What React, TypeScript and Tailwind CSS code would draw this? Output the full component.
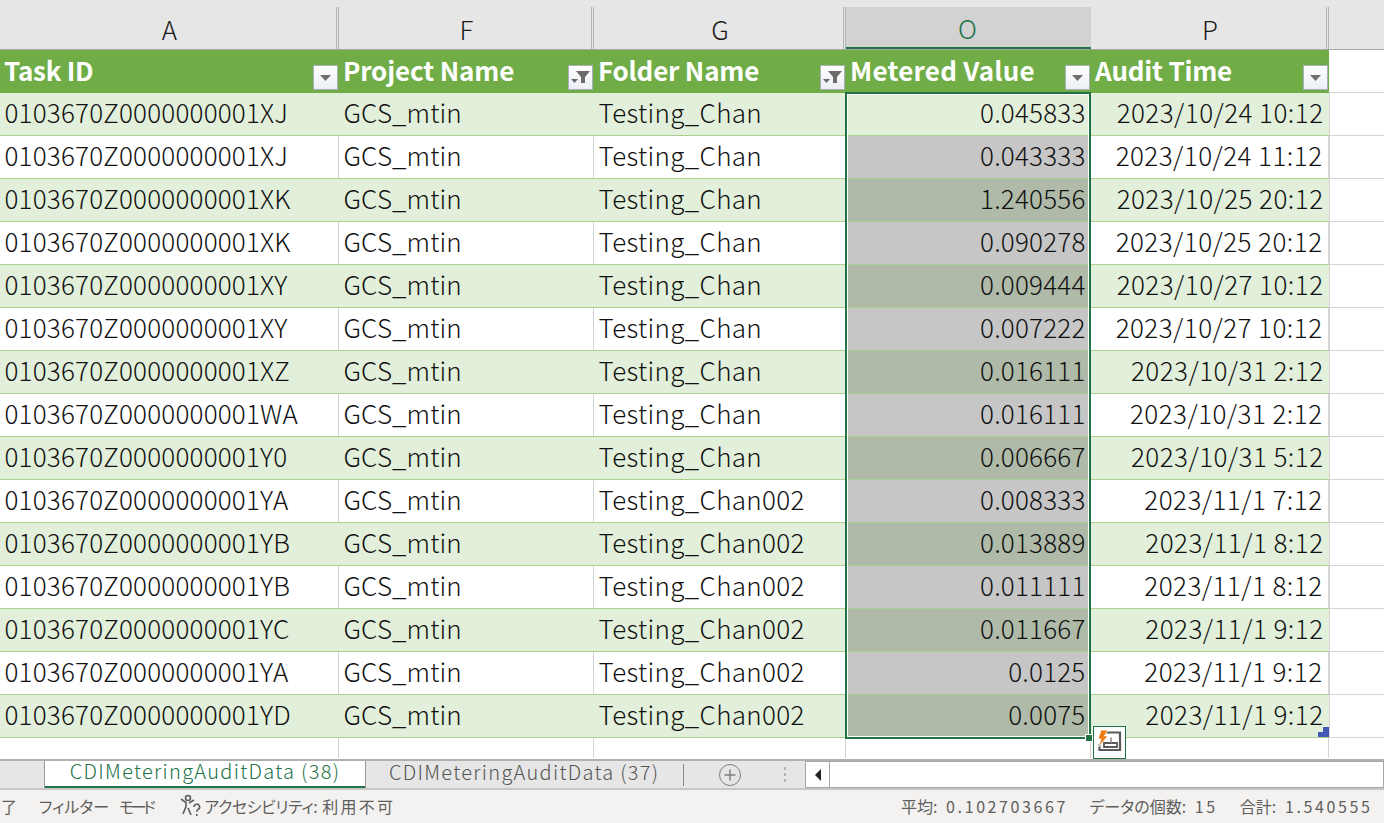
const FONT = "font-['Noto_Sans_CJK_JP','Noto_Sans',sans-serif]";

type Row = [string, string, string, string];
const rows: Row[] = [
  ["0103670Z0000000001XJ", "Testing_Chan", "0.045833", "2023/10/24 10:12"],
  ["0103670Z0000000001XJ", "Testing_Chan", "0.043333", "2023/10/24 11:12"],
  ["0103670Z0000000001XK", "Testing_Chan", "1.240556", "2023/10/25 20:12"],
  ["0103670Z0000000001XK", "Testing_Chan", "0.090278", "2023/10/25 20:12"],
  ["0103670Z0000000001XY", "Testing_Chan", "0.009444", "2023/10/27 10:12"],
  ["0103670Z0000000001XY", "Testing_Chan", "0.007222", "2023/10/27 10:12"],
  ["0103670Z0000000001XZ", "Testing_Chan", "0.016111", "2023/10/31 2:12"],
  ["0103670Z0000000001WA", "Testing_Chan", "0.016111", "2023/10/31 2:12"],
  ["0103670Z0000000001Y0", "Testing_Chan", "0.006667", "2023/10/31 5:12"],
  ["0103670Z0000000001YA", "Testing_Chan002", "0.008333", "2023/11/1 7:12"],
  ["0103670Z0000000001YB", "Testing_Chan002", "0.013889", "2023/11/1 8:12"],
  ["0103670Z0000000001YB", "Testing_Chan002", "0.011111", "2023/11/1 8:12"],
  ["0103670Z0000000001YC", "Testing_Chan002", "0.011667", "2023/11/1 9:12"],
  ["0103670Z0000000001YA", "Testing_Chan002", "0.0125", "2023/11/1 9:12"],
  ["0103670Z0000000001YD", "Testing_Chan002", "0.0075", "2023/11/1 9:12"],
];

const GRID = "grid grid-cols-[339px_255px_252px_245px_238px_55px]";

function FilterButton({ active }: { active?: boolean }) {
  return (
    <div className="absolute right-px bottom-[3px] flex h-[25px] w-[25px] items-center justify-center border border-[#a9afbd] bg-gradient-to-b from-white to-[#eceef6]">
      {active ? (
        <svg width="19" height="14" viewBox="0 0 19 14">
          <path d="M5 0h14l-5 6v6h-4V6z" fill="#6b6b6b" />
          <path d="M0 8h7l-3.5 4z" fill="#6b6b6b" />
        </svg>
      ) : (
        <svg width="11" height="6" viewBox="0 0 11 6">
          <path d="M0 0h11L5.500 6z" fill="#6f6f6f" />
        </svg>
      )}
    </div>
  );
}

function ColumnHead({ label, selected }: { label: string; selected?: boolean }) {
  return (
    <div
      className={`flex items-center justify-center border-double text-[26px] font-light ${
        selected
          ? "border-b-2 border-b-[#217346] bg-[#d2d2d2] pr-[2px] text-[#217346]"
          : "border-r-[3px] border-[#b4b4b4] pl-[3px] text-[#1a1a1a]"
      }`}
    >
      {label}
    </div>
  );
}

function HeaderCell({ label, active, tracking }: { label: string; active?: boolean; tracking: string }) {
  return (
    <div className={`relative flex h-[43px] items-center pb-[3px] pl-[4px] text-[26px] leading-[30px] font-bold text-white ${tracking}`}>
      {label}
      <FilterButton active={active} />
    </div>
  );
}

function Cell({ children, right, line, selected, tracking }: {
  children: string;
  right?: boolean;
  line: boolean;
  selected?: "band" | "plain";
  tracking: string;
}) {
  let bg = "";
  if (selected === "band") bg = "bg-[#afbaa8]";
  if (selected === "plain") bg = "bg-[#c6c6c6]";
  return (
    <div
      className={`flex h-[42px] items-center whitespace-nowrap pb-[4px] leading-[30px] ${tracking} ${right ? "justify-end pr-[5.500px]" : "pl-[4.500px]"} ${
        line ? "border-r border-[#d4d4d4]" : ""
      } ${bg}`}
    >
      {children}
    </div>
  );
}

function Latin({ children }: { children: string }) {
  return <span className="tracking-[2.600px]">{children}</span>;
}

export default function App() {
  return (
    <div className={`flex h-[823px] w-[1384px] flex-col overflow-hidden bg-white ${FONT}`}>
      <div className="h-[7px] shrink-0 bg-[#e6e6e6]" />
      <div className={`${GRID} h-[42px] shrink-0 bg-[#e6e6e6]`}>
        <ColumnHead label="A" />
        <ColumnHead label="F" />
        <ColumnHead label="G" />
        <ColumnHead label="O" selected />
        <ColumnHead label="P" />
        <div />
      </div>
      <div className="h-px shrink-0 bg-[#a6a6a6]" />

      <div className="relative flex-1">
        <div className={`${GRID} h-[43px]`}>
          <div className="col-span-5 grid grid-cols-subgrid bg-[#70ad47]">
            <HeaderCell label="Task ID" tracking="tracking-[-0.3px]" />
            <HeaderCell label="Project Name" tracking="tracking-[-0.15px]" active />
            <HeaderCell label="Folder Name" tracking="tracking-[-0.2px]" active />
            <HeaderCell label="Metered Value" tracking="tracking-[0.25px]" />
            <HeaderCell label="Audit Time" tracking="tracking-[-0.2px]" />
          </div>
          <div className="border-b border-[#d4d4d4]" />
        </div>

        {rows.map((r, i) => {
          const band = i % 2 === 0;
          return (
            <div key={i} className={`${GRID} h-[43px] text-[26px] font-light text-[#111]`}>
              <div
                className={`col-span-5 grid h-[43px] grid-cols-subgrid border-b border-[#a9d08e] ${
                  band ? "bg-[#e2efda]" : "bg-white"
                }`}
              >
                <Cell line={!band} tracking="tracking-[0.2px]">{r[0]}</Cell>
                <Cell line={!band} tracking="tracking-[0.1px]">GCS_mtin</Cell>
                <Cell line={!band} tracking="tracking-[0.33px]">{r[1]}</Cell>
                <Cell right line={false} tracking="tracking-[0.2px]" selected={i === 0 ? undefined : band ? "band" : "plain"}>
                  {r[2]}
                </Cell>
                <Cell right line={!band} tracking="tracking-[0.45px]">{r[3]}</Cell>
              </div>
              <div className="border-b border-l border-[#d4d4d4]" />
            </div>
          );
        })}

        <div className={`${GRID} h-[20px]`}>
          <div className="border-r border-[#d4d4d4]" />
          <div className="border-r border-[#d4d4d4]" />
          <div className="border-r border-[#d4d4d4]" />
          <div className="border-r border-[#d4d4d4]" />
          <div className="border-r border-[#d4d4d4]" />
          <div />
        </div>

        {/* selection, fill handle, quick analysis, table resize corner */}
        <div className="pointer-events-none absolute left-[845px] top-[42px] h-[647px] w-[246px] border-2 border-[#217346] shadow-[inset_0_0_0_1px_#ffffff]" />
        <div className="absolute left-[1085px] top-[684px] h-[8px] w-[8px] border border-white bg-[#217346]" />
        <div className="absolute left-[1093px] top-[676px] flex h-[33px] w-[33px] items-center justify-center border border-[#217346] bg-white">
          <svg width="26" height="26" viewBox="0 0 26 26">
            <path d="M6 2.500h17v17.500H2.500v-6" fill="none" stroke="#595959" strokeWidth="2.200" />
            <path d="M7 13h13v4H7z" fill="none" stroke="#595959" strokeWidth="1.800" />
            <path d="M13 7.500h2v5h-2z" fill="#a6a6a6" />
            <path d="M4 0h7L7.500 6H11L1.500 17 4 9H1z" fill="#ed7d14" stroke="#ffffff" strokeWidth="0.800" />
          </svg>
        </div>
        <svg className="absolute left-[1318px] top-[677px]" width="11" height="10" viewBox="0 0 11 10">
          <path d="M11 0v10H0V5h5V0z" fill="#4458b5" />
        </svg>
      </div>

      <div className="flex h-[31px] shrink-0 items-stretch border-y-2 border-t-[#b0b0b0] border-b-[#c6c6c6] bg-[#e6e6e6] text-[20px] font-light tracking-[1.300px] text-[#555]">
        <div className="w-[45px] border-r border-[#9a9a9a]" />
        <div className="flex w-[320px] items-center justify-center border-b-2 border-[#217346] bg-white pb-[5px] text-[#217346]">
          CDIMeteringAuditData (38)
        </div>
        <div className="flex w-[319px] items-center border-l border-[#9a9a9a] pb-[5px] pl-[23px]">
          CDIMeteringAuditData (37)
          <span className="ml-auto mt-[5px] h-[22px] w-px bg-[#8a8a8a]" />
        </div>
        <div className="flex w-[92px] items-center justify-center">
          <svg width="22" height="22" viewBox="0 0 22 22">
            <circle cx="11" cy="11" r="10.500" fill="none" stroke="#7f7f7f" />
            <path d="M11 5.500v11M5.500 11h11" stroke="#7f7f7f" strokeWidth="1.500" />
          </svg>
        </div>
        <div className="flex w-[29px] flex-col items-center justify-center gap-[3px] pr-[11px]">
          <span className="h-[3px] w-[2px] bg-[#b5b5b5]" />
          <span className="h-[3px] w-[2px] bg-[#b5b5b5]" />
          <span className="h-[3px] w-[2px] bg-[#b5b5b5]" />
        </div>
        <div className="flex flex-1 border border-[#a6a6a6] bg-white">
          <div className="flex w-[24px] items-center justify-center border-r border-[#a6a6a6]">
            <svg width="6" height="12" viewBox="0 0 6 12">
              <path d="M6 0v12L0 6z" fill="#222" />
            </svg>
          </div>
        </div>
      </div>

      <div className="flex h-[33px] shrink-0 items-center bg-[#f3f2f1] pb-[1px] text-[16px] text-[#605e5c] [font-feature-settings:'palt']">
        <span className="w-[39px] pl-[1px]">了</span>
        <span>フィルター</span>
        <span className="ml-[10px] tracking-[-3.500px]">モード</span>
        <svg className="ml-[27px]" width="24" height="24" viewBox="0 0 24 24" fill="none" stroke="#605e5c" strokeWidth="1.600">
          <circle cx="9" cy="4" r="2.500" />
          <path d="M2 5l5 3.500v4L4 20M15 6l-5 3M9 14l3 7" />
          <path d="M15 13a2.800 2.800 0 1 1 4 2.500c-1.200.6-1.200 1.200-1.200 2.300M17.800 20v2" />
        </svg>
        <span className="ml-px tracking-[-0.400px]">アクセシビリティ:</span>
        <span className="ml-[5px] tracking-[2.200px]">利用不可</span>
        <span className="ml-auto">平均<Latin>: 0.102703667</Latin></span>
        <span className="ml-[21.500px]">データの個数<Latin>: 15</Latin></span>
        <span className="ml-[22px] mr-[11.500px]">合計<Latin>: 1.540555</Latin></span>
      </div>
    </div>
  );
}
